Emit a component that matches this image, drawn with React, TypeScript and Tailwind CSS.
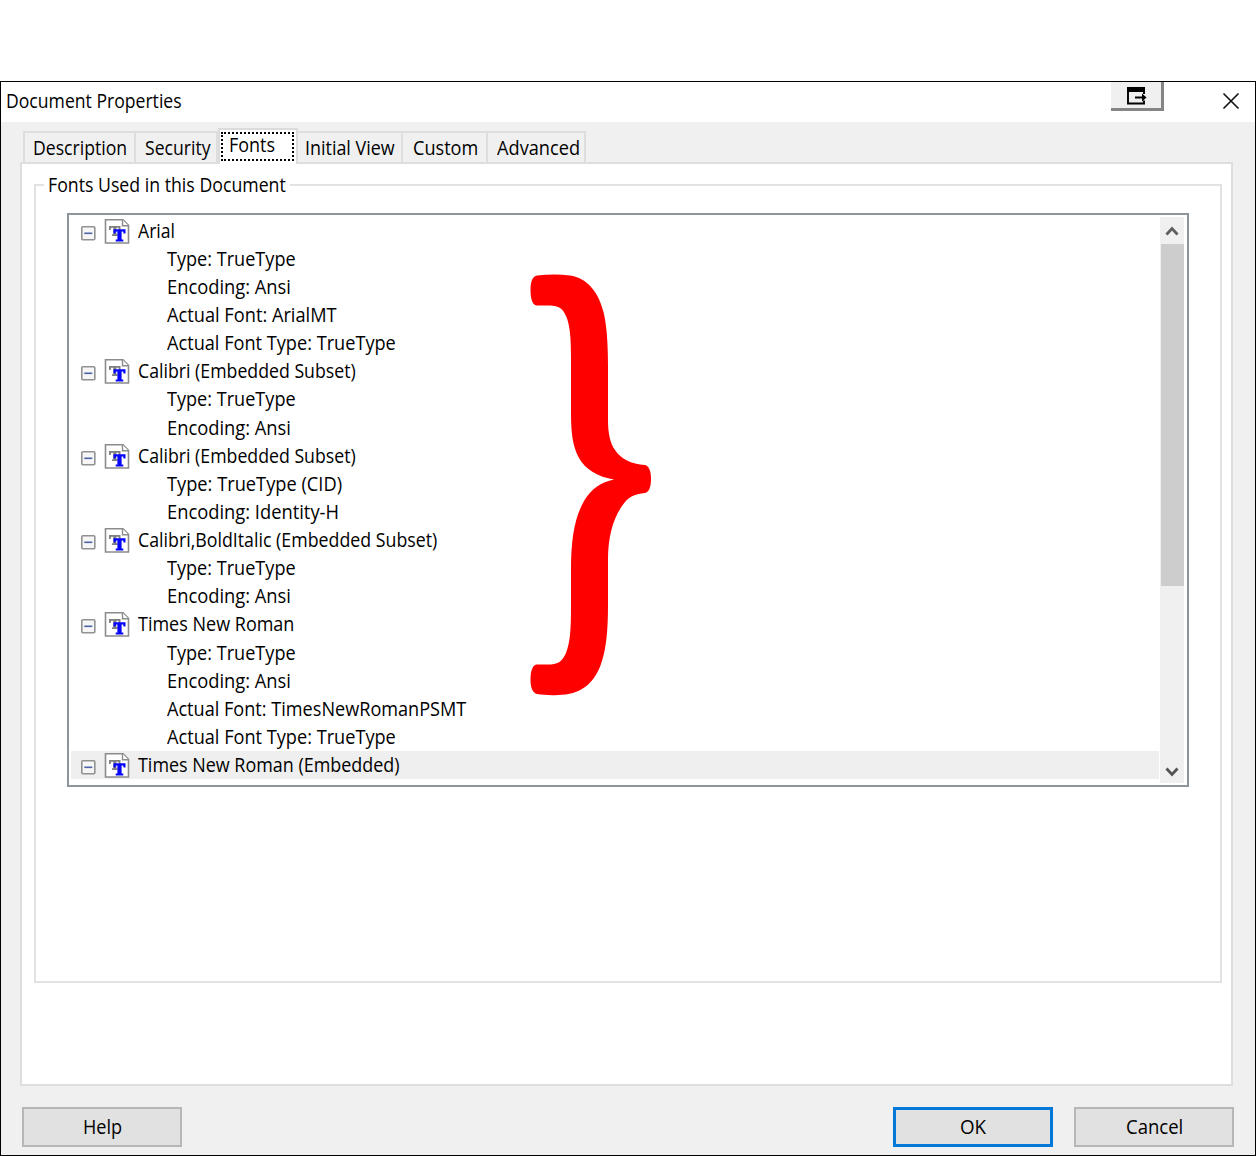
import React from "react";

type Row = { label: string; parent?: boolean; w: string; selected?: boolean };

const rows: Row[] = [
  { label: "Arial", parent: true, w: "w-[37px]" },
  { label: "Type: TrueType", w: "w-[129px]" },
  { label: "Encoding: Ansi", w: "w-[124px]" },
  { label: "Actual Font: ArialMT", w: "w-[170px]" },
  { label: "Actual Font Type: TrueType", w: "w-[229px]" },
  { label: "Calibri (Embedded Subset)", parent: true, w: "w-[218px]" },
  { label: "Type: TrueType", w: "w-[129px]" },
  { label: "Encoding: Ansi", w: "w-[124px]" },
  { label: "Calibri (Embedded Subset)", parent: true, w: "w-[218px]" },
  { label: "Type: TrueType (CID)", w: "w-[175px]" },
  { label: "Encoding: Identity-H", w: "w-[172px]" },
  { label: "Calibri,BoldItalic (Embedded Subset)", parent: true, w: "w-[299px]" },
  { label: "Type: TrueType", w: "w-[129px]" },
  { label: "Encoding: Ansi", w: "w-[124px]" },
  { label: "Times New Roman", parent: true, w: "w-[156px]" },
  { label: "Type: TrueType", w: "w-[129px]" },
  { label: "Encoding: Ansi", w: "w-[124px]" },
  { label: "Actual Font: TimesNewRomanPSMT", w: "w-[299px]" },
  { label: "Actual Font Type: TrueType", w: "w-[229px]" },
  { label: "Times New Roman (Embedded)", parent: true, w: "w-[262px]", selected: true },
];

/* Label whose letters are condensed or widened to fill the given width. */
function Label({ text, w }: { text: string; w: string }) {
  const outer = React.useRef<HTMLSpanElement>(null);
  const inner = React.useRef<HTMLSpanElement>(null);
  const [scale, setScale] = React.useState(1);
  React.useLayoutEffect(() => {
    const fit = () => {
      if (outer.current && inner.current) {
        setScale(outer.current.clientWidth / inner.current.offsetWidth);
      }
    };
    fit();
    document.fonts?.ready.then(fit);
  }, [text]);
  return (
    <span ref={outer} className={`block shrink-0 whitespace-nowrap ${w}`}>
      <span ref={inner} className="inline-block origin-left" style={{ transform: `scaleX(${scale})` }}>
        {text}
      </span>
    </span>
  );
}

function Toggle() {
  return (
    <svg className="mt-[9px] ml-[10px] shrink-0" width="15" height="15" viewBox="0 0 15 15">
      <rect x="0.8" y="0.8" width="13" height="13" rx="1" fill="#f6f6f6" stroke="#929292" strokeWidth="1.6" />
      <path d="M3.3 7.3h8" stroke="#4b63a7" strokeWidth="1.6" />
    </svg>
  );
}

function FontIcon() {
  return (
    <svg className="mt-[2px] ml-[8px] shrink-0" width="26" height="26" viewBox="0 0 26 26">
      <path d="M1.500 .8h17.500l5.500 5.500v17.700H1.500z" fill="#fff" stroke="#8c8c8c" strokeWidth="1.600" />
      <path d="M18.500 .8v6h6" fill="#fff" stroke="#8c8c8c" strokeWidth="1.400" />
      <path d="M5 7h11.500v4h-1.600l-.5-2.200h-2v6.500h1.300v1.800H8v-1.800h1.300V8.800h-2L6.600 11H5z" fill="#808080" />
      <path d="M9.500 10.200h12v4.300h-1.900l-.5-2h-1.500v8h1.700v2h-7.600v-2h1.700v-8h-1.500l-.5 2H9.500z" fill="#0505ff" />
    </svg>
  );
}

function TreeRow({ row }: { row: Row }) {
  return (
    <div className={`flex h-[28.140px] shrink-0 items-start ${row.selected ? "bg-[#efefef]" : ""}`}>
      {row.parent ? (
        <>
          <Toggle />
          <FontIcon />
          <span className="ml-[8px]"><Label text={row.label} w={row.w} /></span>
        </>
      ) : (
        <span className="ml-[96px]"><Label text={row.label} w={row.w} /></span>
      )}
    </div>
  );
}

function Tab({ label, w, box }: { label: string; w: string; box: string }) {
  return (
    <div className={`flex h-[31px] items-start border-t-2 border-r-2 border-[#dedede] bg-[#f0f0f0] ${box}`}>
      <span className="mt-[1px]"><Label text={label} w={w} /></span>
    </div>
  );
}

function Button({ label, w, primary }: { label: string; w: string; primary?: boolean }) {
  return (
    <button
      className={`flex h-[40px] w-[160px] items-center justify-center bg-[#e1e1e1] ${
        primary ? "border-[3px] border-[#0078d7]" : "border-2 border-[#b6b6b6]"
      }`}
    >
      <Label text={label} w={w} />
    </button>
  );
}

export default function App() {
  return (
    <div className="h-[1156px] w-[1256px] overflow-hidden bg-white pt-[81px] font-['Open_Sans',sans-serif] text-[19.500px] leading-[28px] text-black">
      <div className="relative flex h-[1075px] flex-col border-[1.500px] border-black bg-[#f0f0f0]">
        <header className="flex h-[40px] shrink-0 items-start bg-white pl-[5px]">
          <span className="mt-[5px]"><Label text="Document Properties" w="w-[176px]" /></span>
          <div className="ml-[929px] flex h-[29px] w-[53px] justify-center border-r-[3px] border-b-[3px] border-[#858585] bg-[#f0f0f0]">
            <svg className="mt-[4px]" width="21" height="19" viewBox="0 0 21 19">
              <path d="M1 1h18v5H1z" fill="#000" />
              <path d="M2 2v15.500h16v-3M18 2v6M9 11.500h9" fill="none" stroke="#000" strokeWidth="1.900" />
              <path d="M16 7.500l4.500 4-4.500 4z" fill="#000" />
            </svg>
          </div>
          <svg className="mt-[10px] ml-[58px]" width="18" height="18" viewBox="0 0 18 18">
            <path d="M1.500 1.500l15 15M16.500 1.500l-15 15" stroke="#111" strokeWidth="1.600" />
          </svg>
        </header>

        <nav className="mt-[6px] flex h-[34px] shrink-0 items-end pl-[22px]">
          <Tab label="Description" w="w-[94px]" box="w-[113px] border-l-2 pl-[8px]" />
          <Tab label="Security" w="w-[66px]" box="w-[82px] border-r-0 pl-[9px]" />
          <div className="z-10 -mb-[2px] flex h-[36px] w-[80px] items-start border-2 border-b-0 border-[#dcdcdc] bg-white px-[1px] pt-[2px]">
            <div className="flex h-[29px] w-[73px] items-start border-2 border-dotted border-black pl-[6px]">
              <span className="-mt-[3px]"><Label text="Fonts" w="w-[46px]" /></span>
            </div>
          </div>
          <Tab label="Initial View" w="w-[90px]" box="w-[105px] pl-[7px]" />
          <Tab label="Custom" w="w-[65px]" box="w-[85px] pl-[10px]" />
          <Tab label="Advanced" w="w-[83px]" box="w-[98px] pl-[9px]" />
        </nav>

        <main className="ml-[19px] h-[924px] w-[1213px] shrink-0 border-2 border-[#dedede] bg-white pt-[20px] pl-[12px]">
          <section className="h-[799px] w-[1188px] border-2 border-[#e2e2e2] pl-[31px]">
            <h2 className="-mt-[15px] -ml-[23px] w-[246px] bg-white pl-[4px]">
              <Label text="Fonts Used in this Document" w="w-[238px]" />
            </h2>
            <div className="mt-[14px] flex h-[574px] w-[1122px] border-2 border-[#8f949c] bg-white py-[2px] pr-[2px] pl-[2px]">
              <div className="-mt-[0.300px] flex w-[1088px] shrink-0 flex-col">
                {rows.map((row, i) => <TreeRow key={i} row={row} />)}
              </div>
              <div className="ml-[1px] flex w-[24px] flex-col items-center bg-[#f0f0f0]">
                <svg className="mt-[8px] shrink-0" width="14" height="12" viewBox="0 0 14 12">
                  <path d="M1.500 9.500L7 3.500l5.500 6" fill="none" stroke="#5e5e5e" strokeWidth="2.800" />
                </svg>
                <div className="mt-[7px] h-[342px] w-[23px] shrink-0 bg-[#cdcdcd]" />
                <svg className="mt-auto mb-[5px] shrink-0" width="14" height="12" viewBox="0 0 14 12">
                  <path d="M1.500 2.500L7 8.500l5.500-6" fill="none" stroke="#555" strokeWidth="2.800" />
                </svg>
              </div>
            </div>
          </section>
        </main>

        <footer className="mt-[21px] flex shrink-0 pl-[21px]">
          <Button label="Help" w="w-[39px]" />
          <div className="mr-[21px] ml-auto flex gap-[21px]">
            <Button label="OK" w="w-[26px]" primary />
            <Button label="Cancel" w="w-[57px]" />
          </div>
        </footer>

        <svg className="absolute top-[191px] left-[528px] z-20" width="124" height="424" viewBox="529 273 124 424">
          <path
            d="M537 275.500C549 274 560 274 570 275.500C587 278 599 292 604 314C607 328 608 346 608 366V420C608 433 610 443 615 450C621 459 631 464 645 465C649 466 651 471 651 479C651 487 649 492 645 493C634 494 628 497 622 506C613 519 608 537 608 560V605C608 632 606 650 601 664C594 684 580 695 558 695C551 695.500 543 695 537 694C533 693 530.500 688 530.500 680C530.500 670 533 664.500 537 664.500H547C558 664.500 562 662 566 653C570 643 571 630 571 608V570C571 537 575 517 584 501C591 489 601 482 614 479.500C598 477 585 469 579 458C573 447 571 434 571 414V358C571 338 570 325 566 316C562 307 558 305.500 547 305.500H537C533 305.500 530.500 300 530.500 290C530.500 281 533 276 537 275.500Z"
            fill="#f00"
          />
        </svg>
      </div>
    </div>
  );
}
